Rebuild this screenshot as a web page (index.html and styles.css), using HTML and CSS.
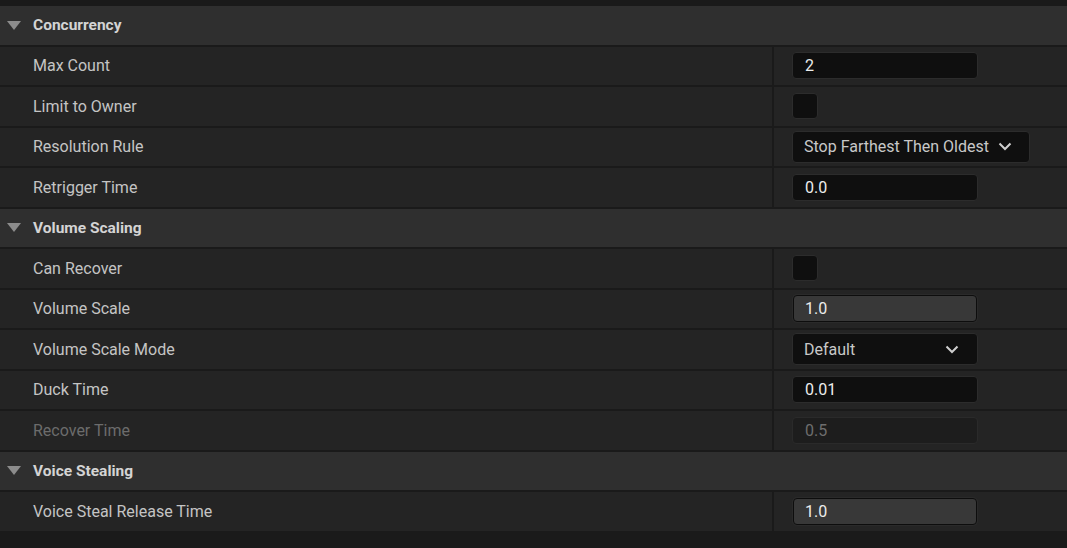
FILE: index.html
```html
<!DOCTYPE html>
<html>
<head>
<meta charset="utf-8">
<link rel="stylesheet" href="styles.css">
</head>
<body>
<div class="panel">
  <div class="header"><span class="caret"></span><span class="htext">Concurrency</span></div>
  <div class="row"><div class="label">Max Count</div><div class="value"><div class="input">2</div></div></div>
  <div class="row"><div class="label">Limit to Owner</div><div class="value"><div class="check"></div></div></div>
  <div class="row"><div class="label">Resolution Rule</div><div class="value"><div class="combo wide"><span>Stop Farthest Then Oldest</span><svg class="chev" width="14" height="9" viewBox="0 0 14 9"><path d="M1.5 1.5 L7 7 L12.5 1.5" fill="none" stroke="#cfcfcf" stroke-width="2"/></svg></div></div></div>
  <div class="row"><div class="label">Retrigger Time</div><div class="value"><div class="input">0.0</div></div></div>
  <div class="header"><span class="caret"></span><span class="htext">Volume Scaling</span></div>
  <div class="row"><div class="label">Can Recover</div><div class="value"><div class="check"></div></div></div>
  <div class="row"><div class="label">Volume Scale</div><div class="value"><div class="input spin">1.0</div></div></div>
  <div class="row"><div class="label">Volume Scale Mode</div><div class="value"><div class="combo narrow"><span>Default</span><svg class="chev" width="14" height="9" viewBox="0 0 14 9"><path d="M1.5 1.5 L7 7 L12.5 1.5" fill="none" stroke="#cfcfcf" stroke-width="2"/></svg></div></div></div>
  <div class="row"><div class="label">Duck Time</div><div class="value"><div class="input">0.01</div></div></div>
  <div class="row"><div class="label disabled">Recover Time</div><div class="value"><div class="input off">0.5</div></div></div>
  <div class="header"><span class="caret"></span><span class="htext">Voice Stealing</span></div>
  <div class="row"><div class="label">Voice Steal Release Time</div><div class="value"><div class="input spin">1.0</div></div></div>
</div>
</body>
</html>
```
FILE: styles.css
```css
html, body {
  margin: 0;
  padding: 0;
  background: #1a1a1a;
  width: 1067px;
  height: 548px;
  overflow: hidden;
  font-family: Roboto, "Liberation Sans", sans-serif;
  font-size: 16px;
}
.panel {
  display: flex;
  flex-direction: column;
  gap: 2px;
  padding-top: 6px;
}
.header {
  height: 38.5px;
  background: #2f2f2f;
  display: flex;
  align-items: center;
  box-sizing: border-box;
}
.caret {
  width: 0;
  height: 0;
  border-left: 7.5px solid transparent;
  border-right: 7.5px solid transparent;
  border-top: 9px solid #8c8c8c;
  margin-left: 7px;
  margin-right: 11px;
}
.htext {
  color: #d4d4d4;
  font-weight: 700;
  font-size: 15.5px;
  margin-left: 1px;
}
.row {
  height: 38.5px;
  background: #242424;
  display: flex;
  align-items: stretch;
}
.label {
  width: 772px;
  padding-left: 33px;
  box-sizing: border-box;
  display: flex;
  align-items: center;
  color: #c4c4c4;
}
.label.disabled {
  color: #6c6c6c;
}
.value {
  flex: 1;
  border-left: 2px solid #1a1a1a;
  padding-left: 18px;
  display: flex;
  align-items: center;
}
.input {
  width: 186px;
  height: 27px;
  box-sizing: border-box;
  background: #0f0f0f;
  border: 1px solid #2c2c2c;
  border-radius: 4px;
  color: #ececec;
  padding-left: 12px;
  display: flex;
  align-items: center;
}
.input.spin {
  background: #383838;
  border: 1px solid #0d0d0d;
  box-shadow: 0 0 0 1px #2a2a2a;
  width: 184px;
  margin-left: 1px;
  padding-left: 11px;
}
.input.off {
  background: #1d1d1d;
  border: 1px solid #2a2a2a;
  color: #6e6e6e;
}
.check {
  width: 26px;
  height: 26px;
  box-sizing: border-box;
  background: #0f0f0f;
  border: 1px solid #2c2c2c;
  border-radius: 4px;
}
.combo {
  height: 32px;
  box-sizing: border-box;
  background: #0f0f0f;
  border: 1px solid #2c2c2c;
  border-radius: 4px;
  color: #c8c8c8;
  padding-left: 11px;
  display: flex;
  align-items: center;
}
.combo.wide {
  width: 238px;
}
.combo.wide .chev {
  margin-left: 9px;
}
.combo.narrow {
  width: 186px;
}
.combo.narrow .chev {
  margin-left: auto;
  margin-right: 18px;
}
```
